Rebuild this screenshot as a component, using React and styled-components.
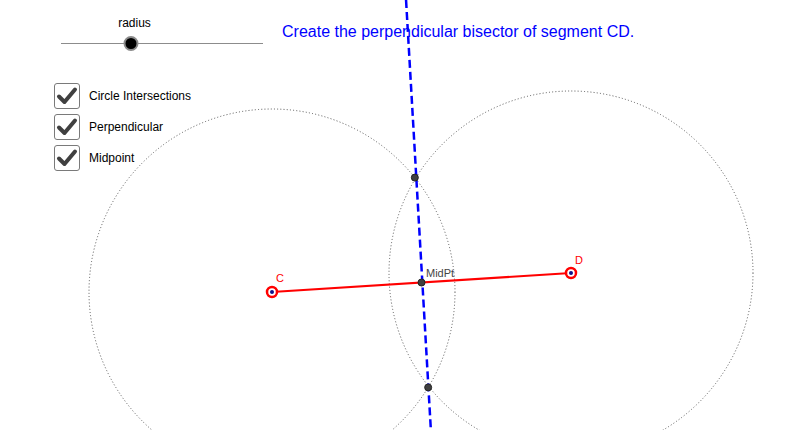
import React from 'react';
import styled, { createGlobalStyle } from 'styled-components';

const GlobalStyle = createGlobalStyle`
  html, body {
    margin: 0;
    padding: 0;
    background: #fff;
    font-family: "Liberation Sans", Arial, sans-serif;
  }
`;

const Applet = styled.div`
  position: relative;
  width: 800px;
  height: 430px;
  overflow: hidden;
  background: #fff;
`;

const Canvas = styled.svg`
  display: block;
  width: 800px;
  height: 430px;
`;

const Controls = styled.div`
  position: absolute;
  left: 54px;
  top: 16px;
  display: flex;
  flex-direction: column;
  gap: 38px;
`;

const Slider = styled.div`
  width: 202px;
  margin-left: 7px;
  display: flex;
  flex-direction: column;
  align-items: center;
  gap: 13px;
`;

const SliderLabel = styled.span`
  font-size: 12px;
  line-height: 14px;
  color: #000;
  margin-left: -55px;
`;

const Track = styled.div`
  position: relative;
  width: 100%;
  height: 1px;
  background: #8c8c8c;
`;

const Knob = styled.span`
  position: absolute;
  top: -7px;
  width: 11px;
  height: 11px;
  border-radius: 50%;
  background: #000;
  border: 2px solid #8a8a8a;
  transform: translateX(-50%);
`;

const CheckList = styled.div`
  display: flex;
  flex-direction: column;
  gap: 3px;
`;

const CheckRow = styled.label`
  display: flex;
  align-items: center;
  gap: 9px;
  font-size: 12px;
  color: #000;
  height: 28px;
`;

const Box = styled.span`
  width: 24px;
  height: 24px;
  border: 1px solid #7a7a7a;
  border-radius: 3px;
  display: flex;
  align-items: center;
  justify-content: center;
  background: #fff;
`;

const Title = styled.div`
  position: absolute;
  left: 282px;
  top: 23px;
  font-size: 16px;
  color: #0000ff;
  white-space: nowrap;
`;

const Check = () => (
  <svg width="22" height="22" viewBox="0 0 22 22">
    <path d="M3 11.5 L8.5 17 L19 4.5" fill="none" stroke="#404040" strokeWidth="4" strokeLinecap="round" strokeLinejoin="round" />
  </svg>
);

const C = { x: 272, y: 292 };
const D = { x: 571, y: 273 };
const M = { x: (C.x + D.x) / 2, y: (C.y + D.y) / 2 };
const R = 183;

function geometry() {
  const dx = D.x - C.x;
  const dy = D.y - C.y;
  const d = Math.hypot(dx, dy);
  const h = Math.sqrt(R * R - (d / 2) * (d / 2));
  const px = -dy / d;
  const py = dx / d;
  const i1 = { x: M.x - px * h, y: M.y - py * h };
  const i2 = { x: M.x + px * h, y: M.y + py * h };
  const t0 = -M.y / py;
  const t1 = (430 - M.y) / py;
  return {
    i1,
    i2,
    top: { x: M.x + px * t0 + 2.5, y: 0 },
    bottom: { x: M.x + px * t1, y: 430 },
  };
}

const options = ['Circle Intersections', 'Perpendicular', 'Midpoint'];

export default function App() {
  const g = geometry();
  return (
    <Applet>
      <GlobalStyle />
      <Canvas viewBox="0 0 800 430">
        <circle cx={C.x} cy={C.y} r={R} fill="none" stroke="#555" strokeWidth="1" strokeDasharray="1 2.2" />
        <circle cx={D.x} cy={D.y} r={R - 1} fill="none" stroke="#555" strokeWidth="1" strokeDasharray="1 2.2" />
        <line x1={C.x} y1={C.y} x2={D.x} y2={D.y} stroke="#ff0000" strokeWidth="2" />
        <line x1={g.top.x} y1={g.top.y} x2={g.bottom.x} y2={g.bottom.y} stroke="#0000ff" strokeWidth="2.5" strokeDasharray="8 4" />
        {[g.i1, g.i2, M].map((p, i) => (
          <circle key={i} cx={p.x} cy={p.y} r="3.5" fill="#404040" stroke="#222" strokeWidth="1" />
        ))}
        {[C, D].map((p, i) => (
          <g key={i}>
            <circle cx={p.x} cy={p.y} r="5" fill="#fff" stroke="#ff0000" strokeWidth="2.5" />
            <circle cx={p.x} cy={p.y} r="2" fill="#10108a" />
          </g>
        ))}
        <text x="276" y="282" fill="#ff0000" fontSize="11" fontFamily="Liberation Sans, Arial, sans-serif">C</text>
        <text x="575" y="264" fill="#ff0000" fontSize="11" fontFamily="Liberation Sans, Arial, sans-serif">D</text>
        <text x="426" y="277" fill="#444" fontSize="11" fontFamily="Liberation Sans, Arial, sans-serif">MidPt</text>
      </Canvas>
      <Title>Create the perpendicular bisector of segment CD.</Title>
      <Controls>
        <Slider>
          <SliderLabel>radius</SliderLabel>
          <Track>
            <Knob style={{ left: '34.5%' }} />
          </Track>
        </Slider>
        <CheckList>
          {options.map((o) => (
            <CheckRow key={o}>
              <Box>
                <Check />
              </Box>
              {o}
            </CheckRow>
          ))}
        </CheckList>
      </Controls>
    </Applet>
  );
}
